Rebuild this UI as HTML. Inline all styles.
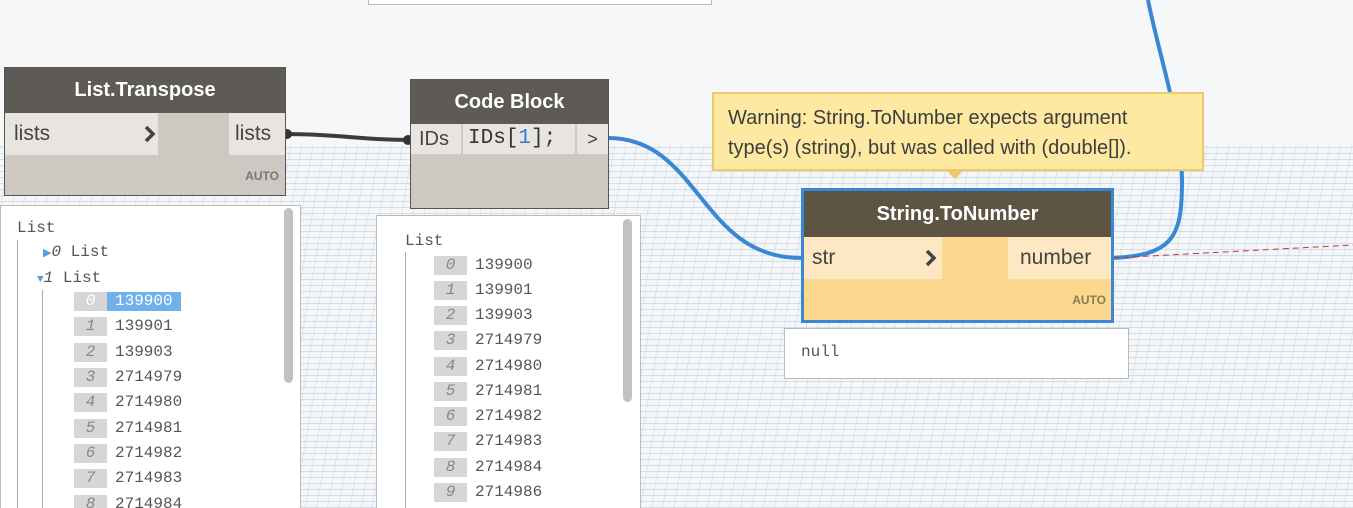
<!DOCTYPE html>
<html style="overflow:hidden;height:508px"><head><meta charset="utf-8"><style>
html,body{margin:0;width:1353px;height:508px;overflow:hidden}
body{position:relative;background:#f6f7f8;font-family:"Liberation Sans",sans-serif}
.grid{position:absolute;left:0;top:145px;width:1353px;height:363px;
background-color:#f4f6f8;
background-image:repeating-linear-gradient(0deg,rgba(150,180,210,.35) 0 1px,transparent 1px 6px),repeating-linear-gradient(100deg,rgba(150,180,210,.25) 0 1px,transparent 1px 11px)}
.abs{position:absolute;box-sizing:border-box}
.node{border:1px solid #555;background:#cdc9c2}
.hdr{background:#5e5b57;color:#fff;font-weight:bold;font-size:20px;text-align:center}
.mono{font-family:"Liberation Mono",monospace}
.panel{background:#fff;border:1px solid #bbb;overflow:hidden}
.row{position:absolute;font-size:16px;color:#555;height:19px;line-height:19px;white-space:nowrap}
.idx{display:inline-block;width:33px;background:#d6d6d6;color:#888;font-style:italic;text-align:center;margin-right:8px}
.sb{position:absolute;width:9px;background:#c2c2c2;border-radius:5px}
.chev{position:absolute;width:14px;height:18px}
</style></head><body>
<div class="grid"></div>
<div class="abs" style="left:368px;top:-2px;width:344px;height:7px;background:#fff;border:1px solid #bbb"></div>
<svg class="abs" style="left:0;top:0" width="1353" height="508">
<path d="M285 134 C340 134,360 140,410 140" stroke="#3c3c3c" stroke-width="4" fill="none"/>
<path d="M608 138 C700 138,700 258,801 258" stroke="#3a87d3" stroke-width="4" fill="none"/>
<path d="M1113 258 C1175 255,1182 235,1182 180 C1182 120,1160 60,1148 0" stroke="#3a87d3" stroke-width="4" fill="none"/>
<path d="M1113 258 L1353 245" stroke="#c33" stroke-width="1" stroke-dasharray="6,4" fill="none"/>
<circle cx="287" cy="134" r="5" fill="#333"/><circle cx="408" cy="140" r="5" fill="#333"/>
</svg>
<!-- List.Transpose -->
<div class="abs node" style="left:4px;top:67px;width:282px;height:129px">
<div class="hdr" style="height:45px;line-height:45px">List.Transpose</div>
<div class="abs" style="left:0;top:45px;width:153px;height:42px;background:#e8e5e0;font-size:21px;color:#444;line-height:42px;padding-left:9px">lists<svg class="chev" style="left:138px;top:12px" viewBox="0 0 14 18"><path d="M3 2 L10 9 L3 16" stroke="#444" stroke-width="3.5" fill="none"/></svg></div>
<div class="abs" style="left:224px;top:45px;width:56px;height:42px;background:#e8e5e0;font-size:21px;color:#444;line-height:42px;padding-left:6px">lists</div>
<div class="abs" style="right:6px;top:101px;font-size:12px;font-weight:bold;color:#777">AUTO</div>
</div>
<!-- Code block -->
<div class="abs node" style="left:410px;top:79px;width:199px;height:130px">
<div class="hdr" style="height:44px;line-height:44px">Code Block</div>
<div class="abs" style="left:0;top:44px;width:50px;height:30px;background:#e8e5e0;font-size:20px;color:#444;line-height:30px;padding-left:8px">IDs</div>
<div class="abs mono" style="left:52px;top:44px;width:112px;height:30px;background:#e8e5e0;font-size:21px;color:#333;line-height:30px;padding-left:5px">IDs[<span style="color:#2f7bd0">1</span>];</div>
<div class="abs" style="left:166px;top:44px;width:31px;height:30px;background:#e8e5e0;font-size:18px;color:#444;line-height:30px;text-align:center">&gt;</div>
</div>
<!-- Tooltip -->
<div class="abs" style="left:712px;top:92px;width:492px;height:79px;background:#fde9a2;border:2px solid #eec96c;font-size:20px;color:#3d3d3d;line-height:30px;padding:9px 0 0 14px">Warning: String.ToNumber expects argument<br>type(s) (string), but was called with (double[]).</div>
<div class="abs" style="left:946px;top:170px;width:0;height:0;border-left:9px solid transparent;border-right:9px solid transparent;border-top:9px solid #eec96c"></div>
<!-- String.ToNumber -->
<div class="abs" style="left:801px;top:188px;width:313px;height:135px;border:3px solid #3a87d3;background:#fcd88f">
<div style="background:#5d5444;color:#fff;font-weight:bold;font-size:20px;text-align:center;height:46px;line-height:46px">String.ToNumber</div>
<div class="abs" style="left:0;top:46px;width:138px;height:42px;background:#fde8c3;font-size:21px;color:#444;line-height:42px;padding-left:8px">str<svg class="chev" style="left:120px;top:12px" viewBox="0 0 14 18"><path d="M3 2 L10 9 L3 16" stroke="#444" stroke-width="3.5" fill="none"/></svg></div>
<div class="abs" style="left:204px;top:46px;width:103px;height:42px;background:#fde8c3;font-size:21px;color:#444;line-height:42px;padding-left:12px">number</div>
<div class="abs" style="right:5px;top:102px;font-size:12px;font-weight:bold;color:#8a7a55">AUTO</div>
</div>
<div class="abs panel mono" style="left:784px;top:328px;width:345px;height:51px;font-size:16px;color:#555;padding:14px 0 0 16px">null</div>
<!-- Left panel -->
<div class="abs panel mono" style="left:0;top:205px;width:301px;height:310px">
<div class="sb" style="left:283px;top:2px;height:175px"></div>
<div class="abs" style="left:16px;top:34px;width:1px;height:280px;background:#aaa"></div>
<div class="abs" style="left:41px;top:84px;width:1px;height:230px;background:#aaa"></div>
<div class="row" style="left:16px;top:13px">List</div>
<div class="row" style="left:42px;top:37px"><span style="color:#5b9bd5;font-size:11px">▶</span><i>0</i> List</div>
<div class="row" style="left:36px;top:63px"><span style="color:#5b9bd5;font-size:11px">▼</span><i>1</i> List</div>
<div class="row" style="left:73px;top:86px;color:#fff"><span class="idx" style="margin-right:0;color:#fff">0</span><span style="background:#6fb1e8;padding:0 8px;display:inline-block">139900</span></div>
<div class="row" style="left:73px;top:111px"><span class="idx">1</span>139901</div>
<div class="row" style="left:73px;top:137px"><span class="idx">2</span>139903</div>
<div class="row" style="left:73px;top:162px"><span class="idx">3</span>2714979</div>
<div class="row" style="left:73px;top:187px"><span class="idx">4</span>2714980</div>
<div class="row" style="left:73px;top:213px"><span class="idx">5</span>2714981</div>
<div class="row" style="left:73px;top:238px"><span class="idx">6</span>2714982</div>
<div class="row" style="left:73px;top:263px"><span class="idx">7</span>2714983</div>
<div class="row" style="left:73px;top:289px"><span class="idx">8</span>2714984</div>
</div>
<!-- Middle panel -->
<div class="abs panel mono" style="left:376px;top:215px;width:265px;height:300px">
<div class="sb" style="left:246px;top:3px;height:183px"></div>
<div class="abs" style="left:28px;top:36px;width:1px;height:270px;background:#aaa"></div>
<div class="row" style="left:28px;top:16px">List</div>
<div class="row" style="left:57px;top:40px"><span class="idx">0</span>139900</div>
<div class="row" style="left:57px;top:65px"><span class="idx">1</span>139901</div>
<div class="row" style="left:57px;top:90px"><span class="idx">2</span>139903</div>
<div class="row" style="left:57px;top:115px"><span class="idx">3</span>2714979</div>
<div class="row" style="left:57px;top:141px"><span class="idx">4</span>2714980</div>
<div class="row" style="left:57px;top:166px"><span class="idx">5</span>2714981</div>
<div class="row" style="left:57px;top:191px"><span class="idx">6</span>2714982</div>
<div class="row" style="left:57px;top:216px"><span class="idx">7</span>2714983</div>
<div class="row" style="left:57px;top:242px"><span class="idx">8</span>2714984</div>
<div class="row" style="left:57px;top:267px"><span class="idx">9</span>2714986</div>
</div>
</body></html>
